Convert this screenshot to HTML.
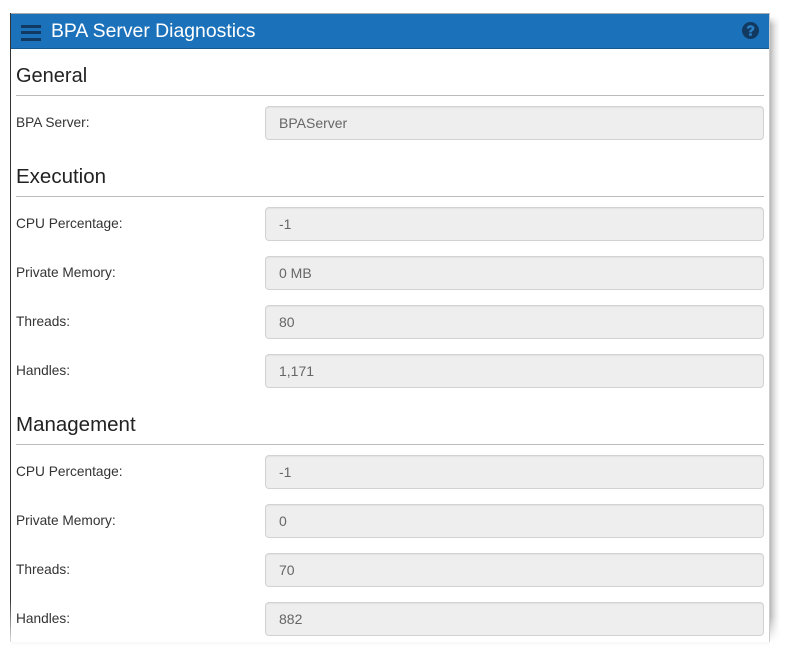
<!DOCTYPE html>
<html><head><meta charset="utf-8"><style>
html,body{margin:0;padding:0;background:#fff}
body{width:787px;height:655px;position:relative;overflow:hidden;font-family:"Liberation Sans",sans-serif}
div{position:absolute;box-sizing:border-box}
.shadowr{left:770px;top:16px;width:10px;height:626px;background:linear-gradient(90deg,rgba(0,0,0,.28),rgba(0,0,0,.18) 25%,rgba(0,0,0,.07) 60%,rgba(0,0,0,0));-webkit-mask-image:linear-gradient(transparent 0,#000 1.5%,#000 96%,transparent 100%)}
.shadowb{left:11px;top:642px;width:759px;height:4px;background:linear-gradient(rgba(0,0,0,.035),rgba(0,0,0,0))}
.panel{left:11px;top:13px;width:759px;height:629px;background:#fff;border-top:1px solid #aaa;border-right:1px solid #ccc}
.left{left:10px;top:13px;width:1px;height:629px;background:linear-gradient(#333 0,#333 93%,#ddd 100%)}
.head{left:11px;top:14px;width:758px;height:35px;background:#1b72bb;border-bottom:1px solid #14588f}
.title{left:51px;top:20px;font-size:19.4px;line-height:23px;color:#fff;white-space:nowrap}
.bar{left:21px;width:20px;height:3px;background:#12395f}
.h{left:16px;font-size:20.5px;line-height:24px;color:#222;white-space:nowrap}
.hr{left:16px;width:748px;height:1px;background:#bbb}
.l{left:16px;font-size:13.7px;line-height:18px;color:#333;white-space:nowrap}
.i{left:265px;width:499px;height:34px;background:#eee;border:1px solid #d2d2d2;border-radius:4px;font-size:14px;line-height:33px;color:#666;padding-left:13px;box-shadow:inset 0 1px 1px rgba(0,0,0,.05)}
</style></head><body>
<div class="shadowr"></div>
<div class="shadowb"></div>
<div class="panel"></div>
<div class="left"></div>
<div class="head"></div>
<div class="bar" style="top:25px"></div>
<div class="bar" style="top:31px"></div>
<div class="bar" style="top:38px"></div>
<div class="title">BPA Server Diagnostics</div>
<svg style="position:absolute;left:742px;top:22px" width="17" height="17" viewBox="0 0 17 17"><circle cx="8.5" cy="8.5" r="8.5" fill="#12395f"/><path d="M4.7 6.4C5 4.2 6.5 3.2 8.6 3.2c2.2 0 3.8 1.3 3.8 3.1 0 1.5-.9 2.2-1.8 2.8-.7.4-.9.7-.9 1.3H7.1c0-1.5.5-2.1 1.4-2.7.7-.4 1.1-.8 1.1-1.3 0-.6-.5-1-1.1-1-.8 0-1.2.5-1.4 1.3z" fill="#2a7fc4"/><rect x="7.1" y="11.3" width="2.7" height="2.5" fill="#2a7fc4"/></svg>

<div class="h" style="top:64px;font-size:20px">General</div><div class="hr" style="top:95px"></div>
<div class="l" style="top:114px">BPA Server:</div><div class="i" style="top:106px">BPAServer</div>

<div class="h" style="top:165px">Execution</div><div class="hr" style="top:196px"></div>
<div class="l" style="top:215px">CPU Percentage:</div><div class="i" style="top:207px">-1</div>
<div class="l" style="top:264px">Private Memory:</div><div class="i" style="top:256px">0 MB</div>
<div class="l" style="top:313px">Threads:</div><div class="i" style="top:305px">80</div>
<div class="l" style="top:362px">Handles:</div><div class="i" style="top:354px">1,171</div>

<div class="h" style="top:413px">Management</div><div class="hr" style="top:444px"></div>
<div class="l" style="top:463px">CPU Percentage:</div><div class="i" style="top:455px">-1</div>
<div class="l" style="top:512px">Private Memory:</div><div class="i" style="top:504px">0</div>
<div class="l" style="top:561px">Threads:</div><div class="i" style="top:553px">70</div>
<div class="l" style="top:610px">Handles:</div><div class="i" style="top:602px">882</div>
</body></html>
